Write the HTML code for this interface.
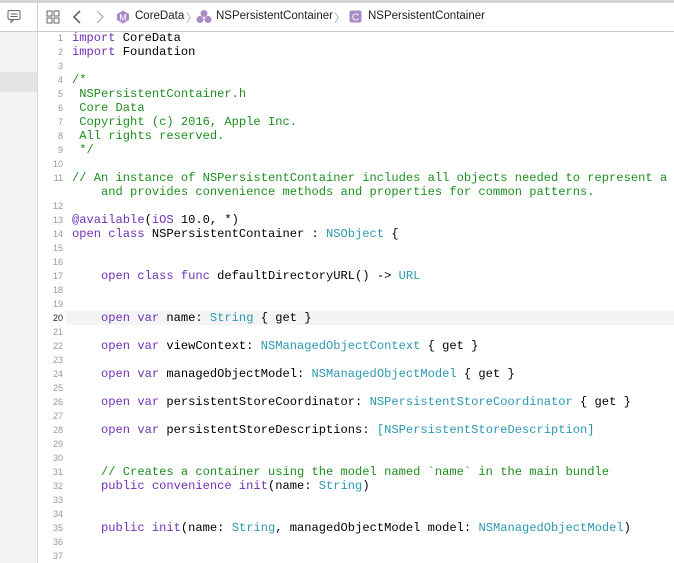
<!DOCTYPE html>
<html><head><meta charset="utf-8"><style>
body{margin:0;width:674px;height:563px;overflow:hidden;background:#fff;font-family:"Liberation Sans",sans-serif;position:relative}
.top{position:absolute;left:0;top:0;width:674px;height:3px;background:#d5d5d5}
.tb{position:absolute;left:0;top:3px;width:674px;height:28px;background:#fff;border-bottom:1px solid #c8c8c8}
.side{position:absolute;left:0;top:32px;width:37px;height:531px;background:#f4f3f2;border-right:1px solid #d8d8d8}
.sel{position:absolute;left:0;top:72px;width:37px;height:20px;background:#e6e4e2}
.vsep{position:absolute;left:37px;top:3px;width:1px;height:28px;background:#d0d0d0}
.crumb{position:absolute;top:10px;font-size:11.5px;color:#222}
.code{position:absolute;left:0;top:31px;width:674px;font-family:"Liberation Mono",monospace;font-size:12.1px}
.r{height:14px;line-height:14px;position:relative;white-space:pre}
.n{position:absolute;left:38px;width:25px;text-align:right;color:#999;font-size:9px;font-family:"Liberation Sans",sans-serif}
.t{position:absolute;left:72px;color:#000}
.hl{background:#f4f4f4}
.k{color:#7031b5}.c{color:#1e8f1e}.y{color:#2b98b0}
</style></head><body>
<div class="top"></div><div class="tb"></div>
<div class="side"></div><div class="sel"></div><div class="vsep"></div>
<svg style="position:absolute;left:7px;top:9px" width="14" height="14" viewBox="0 0 14 14"><rect x="1" y="1.5" width="12" height="9" rx="1.5" fill="none" stroke="#666"/><path d="M4 11v2.5l2.5-2.5M3.5 5h7M3.5 7.5h7" stroke="#666" fill="none"/></svg>
<svg style="position:absolute;left:46px;top:10px" width="14" height="14" viewBox="0 0 14 14" fill="none" stroke="#666"><rect x="1" y="1" width="5" height="5"/><rect x="8" y="1" width="5" height="5"/><rect x="1" y="8" width="5" height="5"/><rect x="8" y="8" width="5" height="5"/></svg>
<svg style="position:absolute;left:72px;top:10px" width="10" height="14"><path d="M8 1L2 7l6 6" stroke="#555" stroke-width="1.5" fill="none"/></svg>
<svg style="position:absolute;left:95px;top:10px" width="10" height="14"><path d="M2 1l6 6-6 6" stroke="#bbb" stroke-width="1.5" fill="none"/></svg>
<svg style="position:absolute;left:116px;top:10px" width="14" height="14"><polygon points="7,0.5 13,4 13,10 7,13.5 1,10 1,4" fill="#a98bc8"/><text x="7" y="10.5" font-size="9" fill="#fff" text-anchor="middle" font-family="Liberation Sans">M</text></svg>
<div class="crumb" style="left:135px">CoreData</div>
<div class="crumb" style="left:186px;color:#aaa">〉</div>
<svg style="position:absolute;left:196px;top:9px" width="16" height="15"><circle cx="8" cy="4.5" r="3.5" fill="#a98bc8"/><circle cx="4" cy="10.5" r="3.5" fill="#a98bc8"/><circle cx="12" cy="10.5" r="3.5" fill="#a98bc8"/></svg>
<div class="crumb" style="left:216px">NSPersistentContainer</div>
<div class="crumb" style="left:334px;color:#aaa">〉</div>
<svg style="position:absolute;left:349px;top:10px" width="13" height="13"><rect x="0.5" y="0.5" width="12" height="12" rx="2" fill="#a98bc8"/><text x="6.5" y="10.5" font-size="10" fill="#fff" text-anchor="middle" font-family="Liberation Sans">C</text></svg>
<div class="crumb" style="left:368px">NSPersistentContainer</div>
<div class="code">
<div class="r"><span class="n">1</span><span class="t"><span class="k">import</span> CoreData</span></div>
<div class="r"><span class="n">2</span><span class="t"><span class="k">import</span> Foundation</span></div>
<div class="r"><span class="n">3</span></div>
<div class="r"><span class="n">4</span><span class="t c">/*</span></div>
<div class="r"><span class="n">5</span><span class="t c"> NSPersistentContainer.h</span></div>
<div class="r"><span class="n">6</span><span class="t c"> Core Data</span></div>
<div class="r"><span class="n">7</span><span class="t c"> Copyright (c) 2016, Apple Inc.</span></div>
<div class="r"><span class="n">8</span><span class="t c"> All rights reserved.</span></div>
<div class="r"><span class="n">9</span><span class="t c"> */</span></div>
<div class="r"><span class="n">10</span></div>
<div class="r"><span class="n">11</span><span class="t c">// An instance of NSPersistentContainer includes all objects needed to represent a</span></div>
<div class="r"><span class="t c">    and provides convenience methods and properties for common patterns.</span></div>
<div class="r"><span class="n">12</span></div>
<div class="r"><span class="n">13</span><span class="t"><span class="k">@available</span>(<span class="k">iOS</span> 10.0, *)</span></div>
<div class="r"><span class="n">14</span><span class="t"><span class="k">open class</span> NSPersistentContainer : <span class="y">NSObject</span> {</span></div>
<div class="r"><span class="n">15</span></div>
<div class="r"><span class="n">16</span></div>
<div class="r"><span class="n">17</span><span class="t">    <span class="k">open class func</span> defaultDirectoryURL() -&gt; <span class="y">URL</span></span></div>
<div class="r"><span class="n">18</span></div>
<div class="r"><span class="n">19</span></div>
<div class="r"><div class="hl" style="position:absolute;left:66px;right:0;top:0;height:14px"></div><span class="n" style="color:#222">20</span><span class="t">    <span class="k">open var</span> name: <span class="y">String</span> { get }</span></div>
<div class="r"><span class="n">21</span></div>
<div class="r"><span class="n">22</span><span class="t">    <span class="k">open var</span> viewContext: <span class="y">NSManagedObjectContext</span> { get }</span></div>
<div class="r"><span class="n">23</span></div>
<div class="r"><span class="n">24</span><span class="t">    <span class="k">open var</span> managedObjectModel: <span class="y">NSManagedObjectModel</span> { get }</span></div>
<div class="r"><span class="n">25</span></div>
<div class="r"><span class="n">26</span><span class="t">    <span class="k">open var</span> persistentStoreCoordinator: <span class="y">NSPersistentStoreCoordinator</span> { get }</span></div>
<div class="r"><span class="n">27</span></div>
<div class="r"><span class="n">28</span><span class="t">    <span class="k">open var</span> persistentStoreDescriptions: <span class="y">[NSPersistentStoreDescription]</span></span></div>
<div class="r"><span class="n">29</span></div>
<div class="r"><span class="n">30</span></div>
<div class="r"><span class="n">31</span><span class="t c">    // Creates a container using the model named `name` in the main bundle</span></div>
<div class="r"><span class="n">32</span><span class="t">    <span class="k">public convenience init</span>(name: <span class="y">String</span>)</span></div>
<div class="r"><span class="n">33</span></div>
<div class="r"><span class="n">34</span></div>
<div class="r"><span class="n">35</span><span class="t">    <span class="k">public init</span>(name: <span class="y">String</span>, managedObjectModel model: <span class="y">NSManagedObjectModel</span>)</span></div>
<div class="r"><span class="n">36</span></div>
<div class="r"><span class="n">37</span></div>
</div>
</body></html>
